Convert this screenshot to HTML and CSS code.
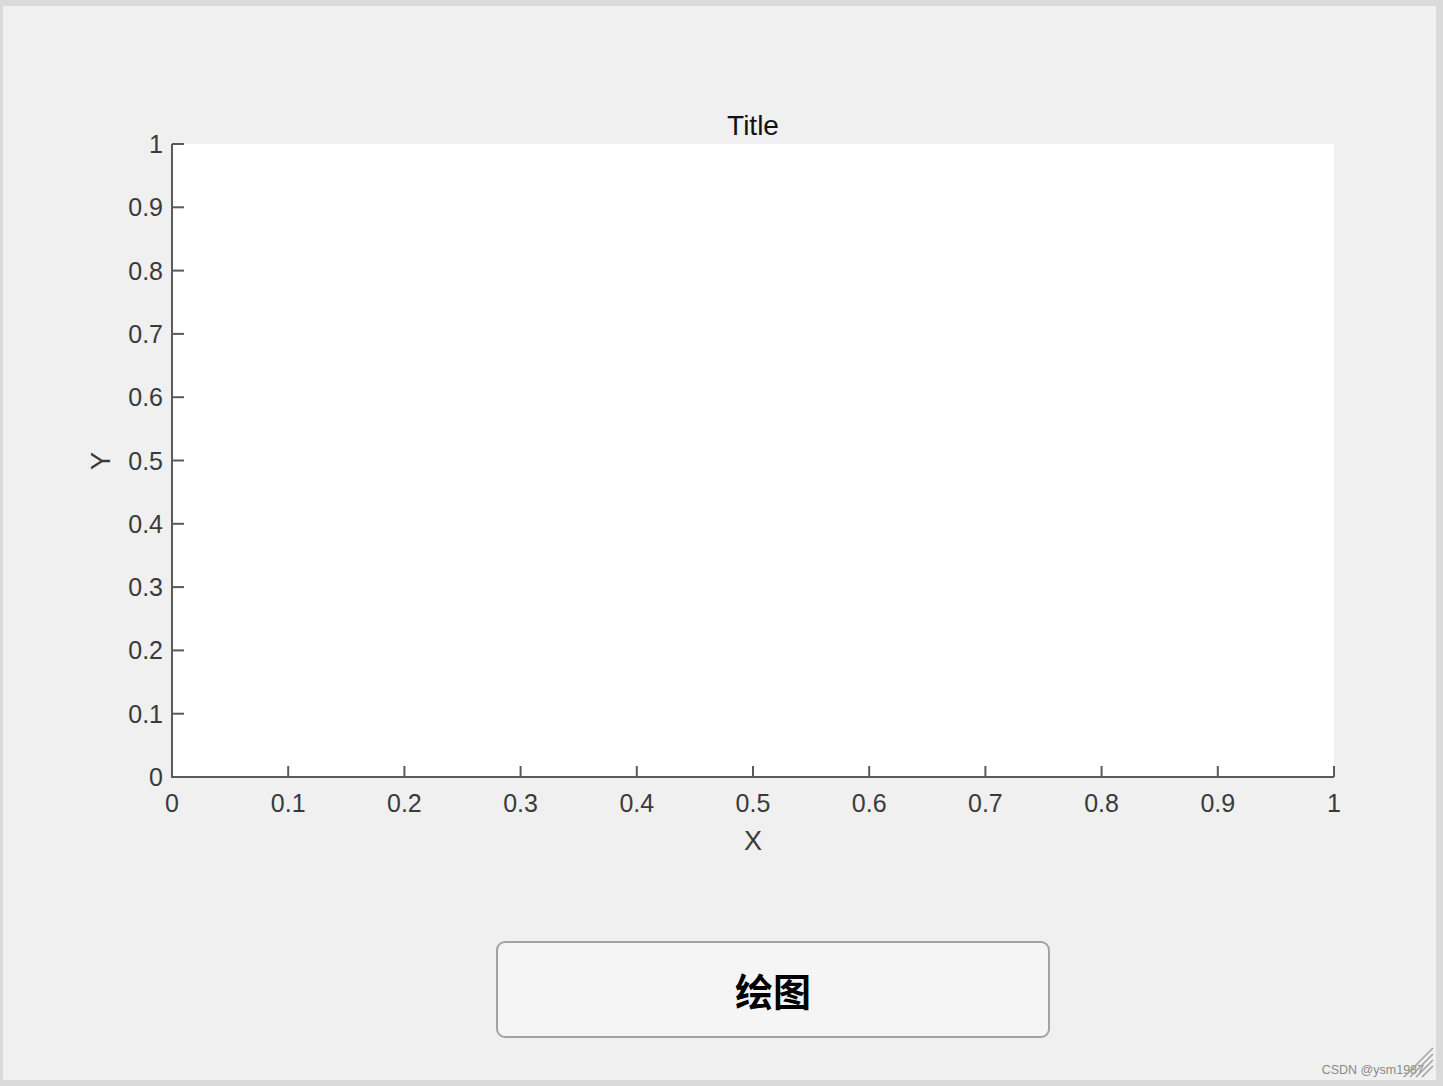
FILE: index.html
```html
<!DOCTYPE html>
<html lang="zh-CN">
<head>
<meta charset="UTF-8">
<title>UI Figure</title>
<link rel="stylesheet" href="styles.css">
</head>
<body>

<div class="figure">
    <svg class="axes" width="1433" height="870" viewBox="3 6 1433 870">
        <rect x="172" y="144" width="1162" height="633" fill="#fff"/>

        <g class="ticks" id="ticks"></g>
        <path class="axis-line" d="M172 144 V777 H1334"/>

        <text class="title" x="753" y="125">Title</text>
        <text class="label" x="753" y="841">X</text>
        <text class="label" x="101" y="461" transform="rotate(-90 101 461)">Y</text>
    </svg>

    <div class="controls">
        <button class="plot-btn">绘图</button>
    </div>

    <span class="watermark">CSDN @ysm1987</span>
    <svg class="grip" width="32" height="32" viewBox="0 0 32 32">
        <path d="M2 31 L31 2 M8 31 L31 8 M14 31 L31 14 M20 31 L31 20"/>
    </svg>
</div>

<script>
var ns = 'http://www.w3.org/2000/svg';
var g = document.getElementById('ticks');

function add(tag, attrs, text) {
    var el = document.createElementNS(ns, tag);
    for (var k in attrs) el.setAttribute(k, attrs[k]);
    if (text !== undefined) el.textContent = text;
    g.appendChild(el);
}

// 0 .. 1 in steps of 0.1 on both axes
for (var i = 0; i <= 10; i++) {
    var label = i === 0 ? '0' : (i === 10 ? '1' : '0.' + i);
    var x = 172 + i * 116.2;
    var y = 777 - i * 63.3;

    add('line', { x1: x, y1: 777, x2: x, y2: 766, 'class': 'tick' });
    add('text', { x: x, y: 803, 'class': 'xtick' }, label);

    add('line', { x1: 172, y1: y, x2: 184, y2: y, 'class': 'tick' });
    add('text', { x: 163, y: y, 'class': 'ytick' }, label);
}
</script>

</body>
</html>
```

FILE: styles.css
```css
body {
    margin: 0;
    background-color: #dadada;
    font-family: "Liberation Sans", Arial, sans-serif;
}

.figure {
    position: relative;
    width: 1433px;
    height: 1074px;
    margin: 6px 0 0 3px;
    background-color: #f0f0f0;
    display: flex;
    flex-direction: column;
}

.axes {
    display: block;
}

.axis-line {
    fill: none;
    stroke: #5a5a5a;
    stroke-width: 2;
}

.tick {
    stroke: #5a5a5a;
    stroke-width: 2;
}

.xtick,
.ytick {
    font-size: 25px;
    fill: #3a3a3a;
    dominant-baseline: central;
}

.xtick {
    text-anchor: middle;
}

.ytick {
    text-anchor: end;
}

.title {
    font-size: 28px;
    fill: #111;
    text-anchor: middle;
    dominant-baseline: central;
}

.label {
    font-size: 27px;
    fill: #3a3a3a;
    text-anchor: middle;
    dominant-baseline: central;
}

.controls {
    display: flex;
    padding-left: 493px;
    margin-top: 65px;
}

.plot-btn {
    width: 554px;
    height: 97px;
    border: 2px solid #a3a3a3;
    border-radius: 9px;
    background-color: #f5f5f5;
    font-family: "Noto Sans CJK SC", sans-serif;
    font-size: 38px;
    font-weight: bold;
    color: #000;
    padding: 0;
}

.watermark {
    position: absolute;
    right: 12px;
    bottom: 3px;
    font-size: 12.5px;
    color: #8a8a8a;
}

.grip {
    position: absolute;
    right: 2px;
    bottom: 2px;
}

.grip path {
    fill: none;
    stroke: #a0a0a0;
    stroke-width: 1.5;
}
```
